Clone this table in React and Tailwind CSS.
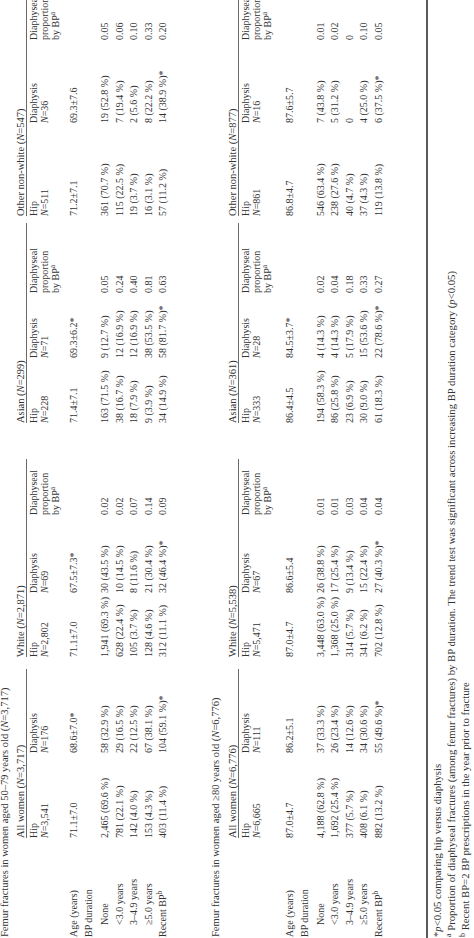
import React from "react";

const GRID =
  "grid grid-cols-[100px_85px_96px_64px_78px_92px_65px_65px_77px_93px_83px_80px]";

function NVal({ v }) {
  return (
    <>
      <i>N</i>={v}
    </>
  );
}

function Group({ span, label, n, mr }) {
  return (
    <div className={span}>
      <div className={`leading-[11px] h-[12px] border-b border-[#6a6a6a] whitespace-nowrap text-[10.5px] ${mr}`}>
        {label} (<i>N</i>={n})
      </div>
    </div>
  );
}

function HipHead({ n }) {
  return (
    <div className="leading-[11px] whitespace-nowrap">
      <div>Hip</div>
      <div>
        <NVal v={n} />
      </div>
    </div>
  );
}

function DiaHead({ n }) {
  return (
    <div className="leading-[11px] whitespace-nowrap">
      <div>Diaphysis</div>
      <div>
        <NVal v={n} />
      </div>
    </div>
  );
}

function PropHead() {
  return (
    <div className="leading-[11px] whitespace-nowrap">
      <div>Diaphyseal</div>
      <div>proportion</div>
      <div>
        by BP<sup>a</sup>
      </div>
    </div>
  );
}

function DataRow({ label, indent, cells, tall }) {
  return (
    <div
      className={`${GRID} ${
        tall ? "h-[15px] leading-[15px]" : "h-[14.5px] leading-[14.5px]"
      } whitespace-nowrap`}
    >
      <div className={indent ? "pl-[13px]" : "pl-[1px]"}>{label}</div>
      {cells.map((c, i) => (
        <div key={i}>{c}</div>
      ))}
    </div>
  );
}

function Section({ title, groups, heads, rows, first }) {
  return (
    <div>
      <div
        className={
          first
            ? "h-[9px] leading-[9px] pl-[1px] whitespace-nowrap text-[10.5px]"
            : "mt-[39px] h-[11px] leading-[11px] pl-[1px] whitespace-nowrap text-[10.5px]"
        }
      >
        {title}
      </div>
      <div className={`${GRID} mt-[6px]`}>
        <div />
        <Group span="col-span-2" label={groups[0][0]} n={groups[0][1]} mr="mr-[12px]" />
        <Group span="col-span-3" label="White" n={groups[1]} mr="mr-[36px]" />
        <Group span="col-span-3" label="Asian" n={groups[2]} mr="mr-[7px]" />
        <Group span="col-span-3" label="Other non-white" n={groups[3]} mr="mr-0" />
      </div>
      <div className={`${GRID} pt-[1px] h-[34px]`}>
        <div />
        <HipHead n={heads[0]} />
        <DiaHead n={heads[1]} />
        <HipHead n={heads[2]} />
        <DiaHead n={heads[3]} />
        <PropHead />
        <HipHead n={heads[4]} />
        <DiaHead n={heads[5]} />
        <PropHead />
        <HipHead n={heads[6]} />
        <DiaHead n={heads[7]} />
        <PropHead />
      </div>
      <div className={first ? "mt-[5px]" : "mt-[9px]"}>
        <DataRow tall label="Age (years)" cells={rows.age} />
        <DataRow tall label="BP duration" cells={[]} />
        <div className="mt-[2px]">
          <DataRow label="None" indent cells={rows.none} />
          <DataRow label="<3.0 years" indent cells={rows.lt3} />
          <DataRow label="3–4.9 years" indent cells={rows.mid} />
          <DataRow label="≥5.0 years" indent cells={rows.ge5} />
          <DataRow
            label={
              <>
                Recent BP<sup>b</sup>
              </>
            }
            cells={rows.recent}
          />
        </div>
      </div>
    </div>
  );
}

const S1 = {
  title: "Femur fractures in women aged 50–79 years old (N=3,717)",
  groups: [["All women", "3,717"], "2,871", "299", "547"],
  heads: ["3,541", "176", "2,802", "69", "228", "71", "511", "36"],
  rows: {
    age: ["71.1±7.0", "68.6±7.0*", "71.1±7.0", "67.5±7.3*", "", "71.4±7.1", "69.3±6.2*", "", "71.2±7.1", "69.3±7.6", ""],
    none: ["2,465 (69.6 %)", "58 (32.9 %)", "1,941 (69.3 %)", "30 (43.5 %)", "0.02", "163 (71.5 %)", "9 (12.7 %)", "0.05", "361 (70.7 %)", "19 (52.8 %)", "0.05"],
    lt3: ["781 (22.1 %)", "29 (16.5 %)", "628 (22.4 %)", "10 (14.5 %)", "0.02", "38 (16.7 %)", "12 (16.9 %)", "0.24", "115 (22.5 %)", "7 (19.4 %)", "0.06"],
    mid: ["142 (4.0 %)", "22 (12.5 %)", "105 (3.7 %)", "8 (11.6 %)", "0.07", "18 (7.9 %)", "12 (16.9 %)", "0.40", "19 (3.7 %)", "2 (5.6 %)", "0.10"],
    ge5: ["153 (4.3 %)", "67 (38.1 %)", "128 (4.6 %)", "21 (30.4 %)", "0.14", "9 (3.9 %)", "38 (53.5 %)", "0.81", "16 (3.1 %)", "8 (22.2 %)", "0.33"],
    recent: ["403 (11.4 %)", "104 (59.1 %)*", "312 (11.1 %)", "32 (46.4 %)*", "0.09", "34 (14.9 %)", "58 (81.7 %)*", "0.63", "57 (11.2 %)", "14 (38.9 %)*", "0.20"],
  },
};

const S2 = {
  title: "Femur fractures in women aged ≥80 years old (N=6,776)",
  groups: [["All women", "6,776"], "5,538", "361", "877"],
  heads: ["6,665", "111", "5,471", "67", "333", "28", "861", "16"],
  rows: {
    age: ["87.0±4.7", "86.2±5.1", "87.0±4.7", "86.6±5.4", "", "86.4±4.5", "84.5±3.7*", "", "86.8±4.7", "87.6±5.7", ""],
    none: ["4,188 (62.8 %)", "37 (33.3 %)", "3,448 (63.0 %)", "26 (38.8 %)", "0.01", "194 (58.3 %)", "4 (14.3 %)", "0.02", "546 (63.4 %)", "7 (43.8 %)", "0.01"],
    lt3: ["1,692 (25.4 %)", "26 (23.4 %)", "1,368 (25.0 %)", "17 (25.4 %)", "0.01", "86 (25.8 %)", "4 (14.3 %)", "0.04", "238 (27.6 %)", "5 (31.2 %)", "0.02"],
    mid: ["377 (5.7 %)", "14 (12.6 %)", "314 (5.7 %)", "9 (13.4 %)", "0.03", "23 (6.9 %)", "5 (17.9 %)", "0.18", "40 (4.7 %)", "0", "0"],
    ge5: ["408 (6.1 %)", "34 (30.6 %)", "341 (6.2 %)", "15 (22.4 %)", "0.04", "30 (9.0 %)", "15 (53.6 %)", "0.33", "37 (4.3 %)", "4 (25.0 %)", "0.10"],
    recent: ["882 (13.2 %)", "55 (49.6 %)*", "702 (12.8 %)", "27 (40.3 %)*", "0.04", "61 (18.3 %)", "22 (78.6 %)*", "0.27", "119 (13.8 %)", "6 (37.5 %)*", "0.05"],
  },
};

function Title({ text }) {
  const parts = text.split("N=");
  return (
    <>
      {parts[0]}
      <i>N</i>={parts[1]}
    </>
  );
}

export default function App() {
  return (
    <div className="w-[474px] h-[938px] overflow-hidden bg-white">
      <div className="w-[938px] h-[474px] origin-top-left [transform:translateY(938px)_rotate(-90deg)] text-[10px] text-[#333333] font-['Liberation_Serif','Times_New_Roman',serif]">
        <Section first title={<Title text={S1.title} />} groups={S1.groups} heads={S1.heads} rows={S1.rows} />
        <Section title={<Title text={S2.title} />} groups={S2.groups} heads={S2.heads} rows={S2.rows} />
        <div className="mt-[40px] border-t-2 border-[#5a5a5a]" />
        <div className="mt-[2px] text-[10.7px] whitespace-nowrap">
          <div className="h-[14px] leading-[14px] pl-[1px]">
            *<i>p</i>&lt;0.05 comparing hip versus diaphysis
          </div>
          <div className="h-[14px] leading-[14px] pl-[1px]">
            <sup>a</sup> Proportion of diaphyseal fractures (among femur fractures) by BP duration. The trend test was
            significant across increasing BP duration category (<i>p</i>&lt;0.05)
          </div>
          <div className="h-[14px] leading-[14px] pl-[1px]">
            <sup>b</sup> Recent BP=2 BP prescriptions in the year prior to fracture
          </div>
        </div>
      </div>
    </div>
  );
}
